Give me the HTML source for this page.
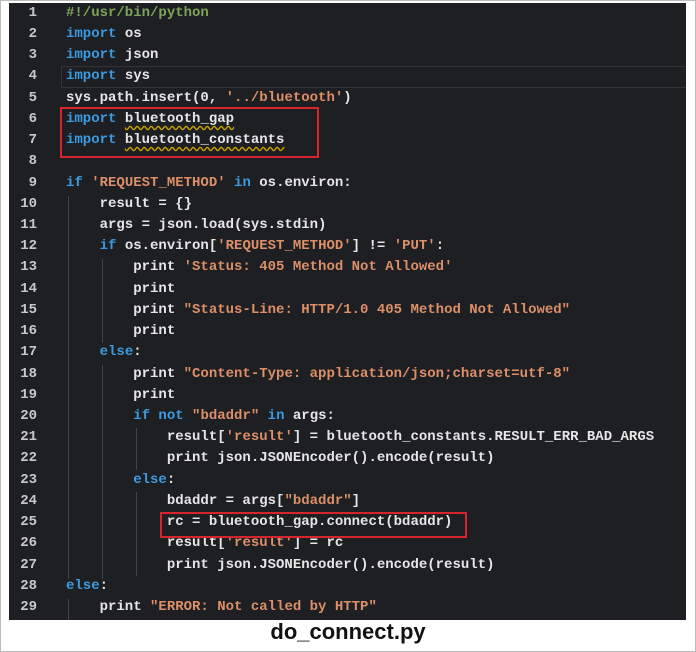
<!DOCTYPE html>
<html><head><style>
body{margin:0;width:696px;height:652px;background:#fff;overflow:hidden;position:relative;font-family:"Liberation Sans",sans-serif}
#frame{position:absolute;left:0;top:0;width:694px;height:650px;border:1px solid #bbb}
#code{position:absolute;left:9px;top:3px;width:677px;height:617px;background:#1e1f22;overflow:hidden}
.l{position:absolute;left:0;height:21px;line-height:21px;font-family:"Liberation Mono",monospace;font-size:14px;font-weight:bold;color:#e6e6e6;white-space:pre}
.n{position:absolute;left:0;width:28px;text-align:right;color:#c8c8c8}
.t{position:absolute;left:57px}
.k{color:#3c9ae0}.s{color:#dc8f68}.c{color:#7ea35a}
.u{text-decoration:underline wavy #c8a200;text-underline-offset:3px}
.box{position:absolute;border:2px solid #d8242c}
.g{position:absolute;width:1px;background:#444}
#cap{position:absolute;left:0;width:696px;top:619px;text-align:center;font-size:22px;font-weight:bold;color:#111}
</style></head><body>
<div id="frame"></div>
<div id="code">
<div style="position:absolute;left:52px;top:63px;width:640px;height:20px;border:1px solid #333"></div>
<div class="g" style="left:59px;top:193px;height:383px"></div>
<div class="g" style="left:93px;top:256px;height:84px"></div>
<div class="g" style="left:93px;top:362px;height:214px"></div>
<div class="g" style="left:127px;top:425px;height:42px"></div>
<div class="g" style="left:127px;top:489px;height:84px"></div>
<div class="g" style="left:59px;top:596px;height:21px"></div>
</div>
<div style="position:absolute;left:9px;top:1px">
<div class="l" style="top:2px"><span class="n">1</span><span class="t c">#!/usr/bin/python</span></div>
<div class="l" style="top:23px"><span class="n">2</span><span class="t"><span class="k">import</span> os</span></div>
<div class="l" style="top:44px"><span class="n">3</span><span class="t"><span class="k">import</span> json</span></div>
<div class="l" style="top:65px"><span class="n">4</span><span class="t"><span class="k">import</span> sys</span></div>
<div class="l" style="top:87px"><span class="n">5</span><span class="t">sys.path.insert(0, <span class="s">'../bluetooth'</span>)</span></div>
<div class="l" style="top:108px"><span class="n">6</span><span class="t"><span class="k">import</span> <span class="u">bluetooth_gap</span></span></div>
<div class="l" style="top:129px"><span class="n">7</span><span class="t"><span class="k">import</span> <span class="u">bluetooth_constants</span></span></div>
<div class="l" style="top:150px"><span class="n">8</span></div>
<div class="l" style="top:172px"><span class="n">9</span><span class="t"><span class="k">if</span> <span class="s">'REQUEST_METHOD'</span> <span class="k">in</span> os.environ:</span></div>
<div class="l" style="top:193px"><span class="n">10</span><span class="t">    result = {}</span></div>
<div class="l" style="top:214px"><span class="n">11</span><span class="t">    args = json.load(sys.stdin)</span></div>
<div class="l" style="top:235px"><span class="n">12</span><span class="t">    <span class="k">if</span> os.environ[<span class="s">'REQUEST_METHOD'</span>] != <span class="s">'PUT'</span>:</span></div>
<div class="l" style="top:256px"><span class="n">13</span><span class="t">        print <span class="s">'Status: 405 Method Not Allowed'</span></span></div>
<div class="l" style="top:278px"><span class="n">14</span><span class="t">        print</span></div>
<div class="l" style="top:299px"><span class="n">15</span><span class="t">        print <span class="s">"Status-Line: HTTP/1.0 405 Method Not Allowed"</span></span></div>
<div class="l" style="top:320px"><span class="n">16</span><span class="t">        print</span></div>
<div class="l" style="top:341px"><span class="n">17</span><span class="t">    <span class="k">else</span>:</span></div>
<div class="l" style="top:363px"><span class="n">18</span><span class="t">        print <span class="s">"Content-Type: application/json;charset=utf-8"</span></span></div>
<div class="l" style="top:384px"><span class="n">19</span><span class="t">        print</span></div>
<div class="l" style="top:405px"><span class="n">20</span><span class="t">        <span class="k">if not</span> <span class="s">"bdaddr"</span> <span class="k">in</span> args:</span></div>
<div class="l" style="top:426px"><span class="n">21</span><span class="t">            result[<span class="s">'result'</span>] = bluetooth_constants.RESULT_ERR_BAD_ARGS</span></div>
<div class="l" style="top:447px"><span class="n">22</span><span class="t">            print json.JSONEncoder().encode(result)</span></div>
<div class="l" style="top:469px"><span class="n">23</span><span class="t">        <span class="k">else</span>:</span></div>
<div class="l" style="top:490px"><span class="n">24</span><span class="t">            bdaddr = args[<span class="s">"bdaddr"</span>]</span></div>
<div class="l" style="top:511px"><span class="n">25</span><span class="t">            rc = bluetooth_gap.connect(bdaddr)</span></div>
<div class="l" style="top:532px"><span class="n">26</span><span class="t">            result[<span class="s">'result'</span>] = rc</span></div>
<div class="l" style="top:554px"><span class="n">27</span><span class="t">            print json.JSONEncoder().encode(result)</span></div>
<div class="l" style="top:575px"><span class="n">28</span><span class="t"><span class="k">else</span>:</span></div>
<div class="l" style="top:596px"><span class="n">29</span><span class="t">    print <span class="s">"ERROR: Not called by HTTP"</span></span></div>
</div>
<div class="box" style="left:60px;top:107px;width:255px;height:47px"></div>
<div class="box" style="left:160px;top:512px;width:303px;height:22px"></div>
<div id="cap">do_connect.py</div>
</body></html>
